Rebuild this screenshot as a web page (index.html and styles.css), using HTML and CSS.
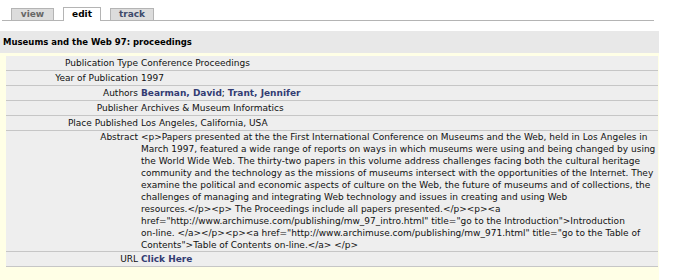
FILE: index.html
```html
<!DOCTYPE html>
<html>
<head>
<meta charset="utf-8">
<link rel="stylesheet" href="styles.css">
</head>
<body>
<div class="tabs">
  <a class="tab tab-view">view</a>
  <a class="tab tab-edit">edit</a>
  <a class="tab tab-track">track</a>
</div>
<div class="node">
  <h2 class="title">Museums and the Web 97: proceedings</h2>
  <div class="content">
    <table class="biblio">
      <tr><td class="label">Publication Type</td><td class="value">Conference Proceedings</td></tr>
      <tr><td class="label">Year of Publication</td><td class="value">1997</td></tr>
      <tr><td class="label">Authors</td><td class="value"><a class="link">Bearman, David</a>; <a class="link">Trant, Jennifer</a></td></tr>
      <tr><td class="label">Publisher</td><td class="value">Archives &amp; Museum Informatics</td></tr>
      <tr><td class="label">Place Published</td><td class="value">Los Angeles, California, USA</td></tr>
      <tr class="abstract-row"><td class="label">Abstract</td><td class="value">&lt;p&gt;Papers presented at the the First International Conference on Museums and the Web, held in Los Angeles in<br>March 1997, featured a wide range of reports on ways in which museums were using and being changed by using<br>the World Wide Web. The thirty-two papers in this volume address challenges facing both the cultural heritage<br>community and the technology as the missions of museums intersect with the opportunities of the Internet. They<br>examine the political and economic aspects of culture on the Web, the future of museums and of collections, the<br>challenges of managing and integrating Web technology and issues in creating and using Web<br>resources.&lt;/p&gt;&lt;p&gt; The Proceedings include all papers presented.&lt;/p&gt;&lt;p&gt;&lt;a<br>href="http://www.archimuse.com/publishing/mw_97_intro.html" title="go to the Introduction"&gt;Introduction<br>on-line. &lt;/a&gt;&lt;/p&gt;&lt;p&gt;&lt;a href="http://www.archimuse.com/publishing/mw_971.html" title="go to the Table of<br>Contents"&gt;Table of Contents on-line.&lt;/a&gt; &lt;/p&gt;</td></tr>
      <tr><td class="label">URL</td><td class="value"><a class="link">Click Here</a></td></tr>
    </table>
  </div>
</div>
</body>
</html>
```

FILE: styles.css
```css
html, body {
  margin: 0;
  padding: 0;
  background: #ffffff;
}
body {
  font-family: "DejaVu Sans", Verdana, sans-serif;
  font-size: 9px;
  color: #111;
  width: 674px;
  height: 280px;
  overflow: hidden;
}
.tabs {
  display: flex;
  align-items: flex-end;
  gap: 9px;
  margin-left: 2px;
  padding-left: 9px;
  width: 643px;
  height: 20px;
  border-bottom: 1px solid #b4b4b4;
}
.tab {
  display: block;
  box-sizing: border-box;
  height: 12px;
  line-height: 11px;
  text-align: center;
  font-weight: bold;
  font-size: 9px;
  background: #dcdcdc;
  border: 1px solid #b4b4b4;
  border-bottom: none;
}
.tab-view { width: 43px; color: #666; }
.tab-edit {
  width: 38px;
  height: 14px;
  margin-bottom: -1px;
  line-height: 13px;
  background: #ffffff;
  color: #000;
}
.tab-track { width: 44px; color: #3d4a6b; }
.node {
  margin-top: 10px;
  width: 659px;
}
.title {
  margin: 0;
  height: 22px;
  line-height: 22px;
  padding-left: 3px;
  background: #e8e8e8;
  font-size: 8.5px;
  font-weight: bold;
  color: #000;
}
.content {
  background: #ffffe6;
  padding: 3px 1px 20px 6px;
}
.biblio {
  width: 100%;
  border-collapse: collapse;
  background: #eeeeee;
}
.biblio td {
  border-bottom: 1px solid #c6c6c6;
  padding: 0;
  line-height: 14px;
  vertical-align: top;
}
.abstract-row td {
  line-height: 12px;
}
.label {
  width: 132px;
  text-align: right;
  white-space: nowrap;
}
.value {
  padding-left: 3px !important;
  white-space: nowrap;
}
.link {
  color: #333c73;
  font-weight: bold;
}
```
